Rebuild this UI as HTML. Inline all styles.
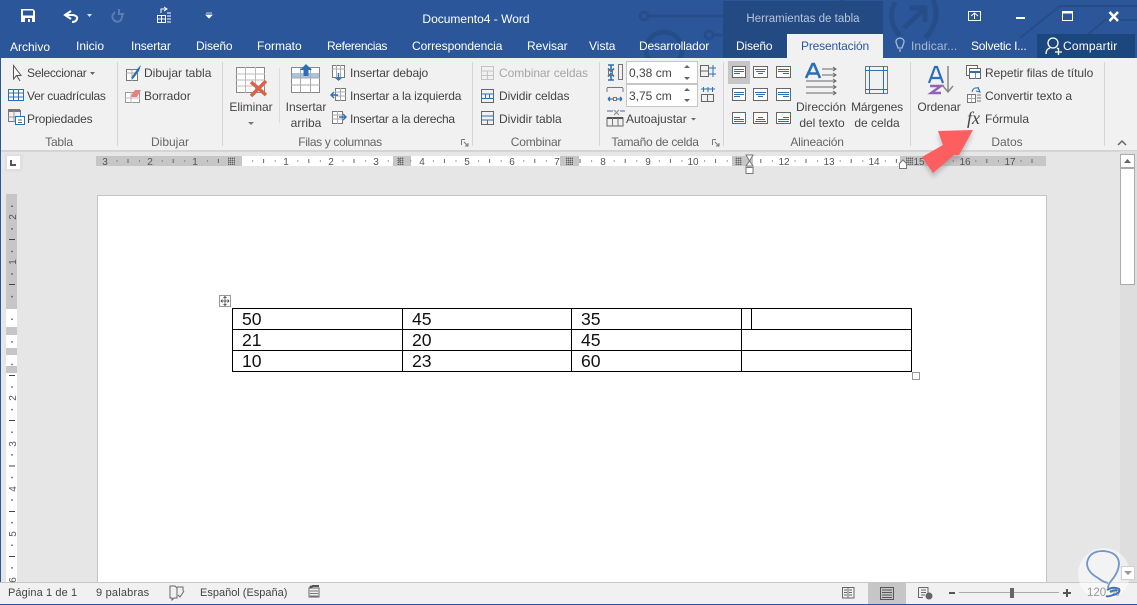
<!DOCTYPE html>
<html lang="es"><head><meta charset="utf-8"><title>Documento4 - Word</title>
<style>
html,body{margin:0;padding:0}
#w{position:relative;width:1137px;height:605px;overflow:hidden;background:#e6e6e6;font-family:"Liberation Sans",sans-serif;font-size:12px;color:#444}
#w div,#w span{position:absolute}
.t{white-space:nowrap;line-height:14px}
.c{transform:translateX(-50%);text-align:center}
.w{color:#fff}
.g{color:#666}
svg{position:absolute;left:0;top:0}
</style></head><body>
<div id="w">
<div style="left:0;top:0;width:1137px;height:58px;background:#2b579a"></div>
<svg width="1137" height="58" fill="none" stroke="#264d88" stroke-width="3">
<circle cx="644" cy="16" r="4"/><path d="M648 16H760M713 35H790L850 -5"/><circle cx="709" cy="35" r="4"/>
<circle cx="664" cy="50" r="18" stroke-width="5"/>
<path d="M895 2Q886 20 900 36M933 0Q942 20 925 38M904 28L925 8M910 8H925V22" stroke-width="5"/>
<path d="M1020 38L1060 6H1137M1060 58L1105 20H1137" stroke-width="2"/>
</svg>
<div style="left:723px;top:1px;width:160px;height:33px;background:#234a83"></div>
<div style="left:723px;top:34px;width:64px;height:24px;background:#234a83"></div>
<div style="left:787px;top:34px;width:96px;height:25px;background:#f1f1f1;border-left:1px solid #fff;box-sizing:border-box"></div>
<div style="left:1037px;top:34px;width:98px;height:24px;background:#1c467e"></div>
<div style="left:0;top:58px;width:1137px;height:92px;background:#f1f1f1;border-bottom:2px solid #d4d4d4"></div>
<div style="left:0;top:0;width:1px;height:605px;background:#2b579a"></div>

<span class="t w c" style="left:476px;top:12px">Documento4 - Word</span>
<span class="t c" style="left:803px;top:12px;color:#b6c4da;font-size:11.5px">Herramientas de tabla</span>
<span class="t w" style="left:10px;top:40px">Archivo</span>
<span class="t w" style="left:76px;top:39px">Inicio</span>
<span class="t w" style="left:131px;top:39px;letter-spacing:-.12px">Insertar</span>
<span class="t w" style="left:196px;top:39px;letter-spacing:-.15px">Diseño</span>
<span class="t w" style="left:257px;top:39px">Formato</span>
<span class="t w" style="left:327px;top:39px;letter-spacing:-.36px">Referencias</span>
<span class="t w" style="left:412px;top:39px;letter-spacing:-.07px">Correspondencia</span>
<span class="t w" style="left:527px;top:39px">Revisar</span>
<span class="t w" style="left:589px;top:39px">Vista</span>
<span class="t w" style="left:639px;top:39px;letter-spacing:-.15px">Desarrollador</span>
<span class="t w" style="left:736px;top:39px;letter-spacing:-.15px">Diseño</span>
<span class="t" style="left:801px;top:39px;color:#2b579a;letter-spacing:-.17px">Presentación</span>
<span class="t" style="left:911px;top:39px;color:#a9b9d3;letter-spacing:.1px">Indicar...</span>
<span class="t w" style="left:971px;top:39px;letter-spacing:-.25px">Solvetic I...</span>
<span class="t w" style="left:1063px;top:39px;letter-spacing:.2px">Compartir</span>

<span class="t" style="left:27px;top:66px;letter-spacing:-.3px">Seleccionar</span>
<span class="t" style="left:27px;top:89px;letter-spacing:-.27px">Ver cuadrículas</span>
<span class="t" style="left:27px;top:112px;letter-spacing:-.18px">Propiedades</span>
<span class="t g c" style="left:59px;top:135px;letter-spacing:-.2px">Tabla</span>
<span class="t" style="left:144px;top:66px">Dibujar tabla</span>
<span class="t" style="left:144px;top:89px">Borrador</span>
<span class="t g c" style="left:170px;top:135px">Dibujar</span>
<span class="t c" style="left:251px;top:100px">Eliminar</span>
<span class="t c" style="left:306px;top:100px">Insertar</span>
<span class="t c" style="left:306px;top:116px">arriba</span>
<span class="t" style="left:350px;top:66px;letter-spacing:-.13px">Insertar debajo</span>
<span class="t" style="left:350px;top:89px;letter-spacing:-.18px">Insertar a la izquierda</span>
<span class="t" style="left:350px;top:112px;letter-spacing:-.25px">Insertar a la derecha</span>
<span class="t g c" style="left:340px;top:135px;letter-spacing:-.37px">Filas y columnas</span>
<span class="t" style="left:499px;top:66px;color:#a6a6a6;letter-spacing:-.07px">Combinar celdas</span>
<span class="t" style="left:499px;top:89px;letter-spacing:-.07px">Dividir celdas</span>
<span class="t" style="left:499px;top:112px">Dividir tabla</span>
<span class="t g c" style="left:536px;top:135px;letter-spacing:-.2px">Combinar</span>
<div style="left:626px;top:61px;width:70px;height:21px;background:#fff;border:1px solid #c6c6c6"></div>
<div style="left:626px;top:84px;width:70px;height:21px;background:#fff;border:1px solid #c6c6c6"></div>
<span class="t" style="left:629px;top:66px">0,38 cm</span>
<span class="t" style="left:629px;top:89px">3,75 cm</span>
<span class="t" style="left:626px;top:112px">Autoajustar</span>
<span class="t g c" style="left:655px;top:135px;letter-spacing:-.27px">Tamaño de celda</span>
<span class="t c" style="left:821px;top:100px">Dirección</span>
<span class="t c" style="left:822px;top:116px">del texto</span>
<span class="t c" style="left:877px;top:100px;letter-spacing:-.2px">Márgenes</span>
<span class="t c" style="left:877px;top:116px">de celda</span>
<span class="t g c" style="left:817px;top:135px;letter-spacing:-.2px">Alineación</span>
<span class="t c" style="left:939px;top:100px;letter-spacing:-.1px">Ordenar</span>
<span class="t" style="left:985px;top:66px;letter-spacing:-.05px">Repetir filas de título</span>
<span class="t" style="left:985px;top:89px;letter-spacing:-.06px">Convertir texto a</span>
<span class="t" style="left:985px;top:112px">Fórmula</span>
<span class="t g c" style="left:1007px;top:135px">Datos</span>

<!-- ruler -->
<div style="left:96px;top:156px;width:950px;height:10px;background:#c6c6c6"></div>
<div style="left:242px;top:156px;width:151px;height:10px;background:#fff"></div>
<div style="left:411px;top:156px;width:149px;height:10px;background:#fff"></div>
<div style="left:579px;top:156px;width:153px;height:10px;background:#fff"></div>
<div style="left:753px;top:156px;width:147px;height:10px;background:#fff"></div>
<div style="left:5px;top:154px;width:18px;height:18px;background:#e0e0e0"></div>
<div style="left:7px;top:156px;width:13px;height:13px;background:#fff"></div>
<!-- vertical ruler -->
<div style="left:6px;top:194px;width:11px;height:388px;background:#fff"></div>
<div style="left:6px;top:194px;width:11px;height:115px;background:#c6c6c6"></div>
<div style="left:6px;top:327px;width:11px;height:8px;background:#c6c6c6"></div>
<div style="left:6px;top:348px;width:11px;height:7px;background:#c6c6c6"></div>
<div style="left:6px;top:366px;width:11px;height:7px;background:#c6c6c6"></div>
<!-- page -->
<div style="left:97px;top:195px;width:950px;height:387px;background:#fff;border:1px solid #c6c6c6;border-bottom:0;box-sizing:border-box"></div>
<!-- scrollbar -->
<div style="left:1120px;top:151px;width:17px;height:431px;background:#dedede"></div>
<div style="left:1120px;top:154px;width:15px;height:14px;background:#fff;border:1px solid #ababab;box-sizing:border-box"></div>
<div style="left:1120px;top:168px;width:15px;height:117px;background:#fff;border:1px solid #ababab;box-sizing:border-box"></div>
<!-- status -->
<div style="left:0;top:582px;width:1137px;height:22px;background:#f1f1f1;border-top:1px solid #c6c6c6;box-sizing:border-box"></div>
<div style="left:0;top:604px;width:1137px;height:1px;background:#2b579a"></div>
<div style="left:868px;top:583px;width:38px;height:21px;background:#c6c6c6"></div>
<span class="t" style="left:8px;top:586px;font-size:11px;letter-spacing:.1px">Página 1 de 1</span>
<span class="t" style="left:96px;top:586px;font-size:11px;letter-spacing:.2px">9 palabras</span>
<span class="t" style="left:200px;top:586px;font-size:11px">Español (España)</span>

<!-- table -->
<svg width="1137" height="605" shape-rendering="crispEdges" stroke="#000" fill="none">
<path d="M232.5 308.5H911.5V371.5H232.5ZM232.5 329.5H911.5M232.5 350.5H911.5M402.5 308V372M571.5 308V372M741.5 308V372M751.5 308V329"/>
</svg>
<span class="t" style="left:242px;top:309px;font-size:17.6px;line-height:20px;color:#111">50</span>
<span class="t" style="left:412px;top:309px;font-size:17.6px;line-height:20px;color:#111">45</span>
<span class="t" style="left:581px;top:309px;font-size:17.6px;line-height:20px;color:#111">35</span>
<span class="t" style="left:242px;top:330px;font-size:17.6px;line-height:20px;color:#111">21</span>
<span class="t" style="left:412px;top:330px;font-size:17.6px;line-height:20px;color:#111">20</span>
<span class="t" style="left:581px;top:330px;font-size:17.6px;line-height:20px;color:#111">45</span>
<span class="t" style="left:242px;top:351px;font-size:17.6px;line-height:20px;color:#111">10</span>
<span class="t" style="left:412px;top:351px;font-size:17.6px;line-height:20px;color:#111">23</span>
<span class="t" style="left:581px;top:351px;font-size:17.6px;line-height:20px;color:#111">60</span>

<!-- ruler marks and icons -->
<svg width="1137" height="605" fill="none">
<defs><filter id="b" x="-30%" y="-30%" width="160%" height="160%"><feGaussianBlur stdDeviation="2.5"/></filter>
<pattern id="h" width="2" height="2" patternUnits="userSpaceOnUse"><rect width="1" height="1" fill="#666"/><rect x="1" width="1" height="1" fill="#999"/><rect y="1" width="1" height="1" fill="#999"/></pattern></defs>
<!-- group separators -->
<path d="M117.500 62V146M222.500 62V146M472.500 62V146M599.500 62V146M723.500 62V146M910.500 62V146M1104.500 62V146" stroke="#d5d5d5"/>
<g font-family="Liberation Sans, sans-serif" font-size="10" fill="#555" text-anchor="middle">
<text x="105" y="165">3</text><text x="150" y="165">2</text><text x="195" y="165">1</text><text x="286" y="165">1</text><text x="331" y="165">2</text><text x="376" y="165">3</text><text x="422" y="165">4</text><text x="467" y="165">5</text><text x="512" y="165">6</text><text x="557" y="165">7</text><text x="603" y="165">8</text><text x="648" y="165">9</text><text x="693" y="165">10</text><text x="784" y="165">12</text><text x="829" y="165">13</text><text x="874" y="165">14</text><text x="919" y="165">15</text><text x="965" y="165">16</text><text x="1010" y="165">17</text>
<text transform="translate(16,217) rotate(-90)">2</text><text transform="translate(16,262) rotate(-90)">1</text><text transform="translate(16,398) rotate(-90)">2</text><text transform="translate(16,444) rotate(-90)">3</text><text transform="translate(16,489) rotate(-90)">4</text><text transform="translate(16,534) rotate(-90)">5</text><text transform="translate(16,580) rotate(-90)">6</text>
</g>
<path d="M116.500 161H1040" stroke="#666" stroke-width="1.300" stroke-dasharray="1 21.6"/>
<path d="M127.500 161H1040" stroke="#666" stroke-width="4" stroke-dasharray="1 44.2"/>
<path d="M12 205.500V570" stroke="#444" stroke-width="1.300" stroke-dasharray="1.500 21.1"/>
<path d="M9 239.500H15M9 284.500H15M9 375.500H15M9 420.500H15M9 466H15M9 511.500H15M9 556.500H15" stroke="#444"/>
<rect x="228" y="157" width="7" height="8" fill="url(#h)"/><rect x="397" y="157" width="7" height="8" fill="url(#h)"/><rect x="566" y="157" width="7" height="8" fill="url(#h)"/><rect x="735" y="157" width="7" height="8" fill="url(#h)"/><rect x="906" y="157" width="7" height="8" fill="url(#h)"/>
<path d="M746 155H753L749.500 161ZM749.500 161L746 166H753Z" fill="#fff" stroke="#777"/><rect x="746" y="167.500" width="7" height="6" fill="#fff" stroke="#777"/>
<path d="M899.500 168.500V163.500L903 160L906.500 163.500V168.500Z" fill="#fff" stroke="#777"/>
<path d="M11 160V165H16" stroke="#555" stroke-width="2"/>

<!-- title icons -->
<path d="M21 9H33L35 11V22H21Z" fill="#fff"/><rect x="23" y="10.500" width="10" height="5" fill="#2b579a"/><rect x="25" y="18" width="7" height="4" fill="#2b579a"/><rect x="28" y="19" width="2" height="3" fill="#fff"/>
<path d="M71 11L65 15L71 19M65 15H73Q78 16 77 19Q76 22 72 22" stroke="#fff" stroke-width="2"/><path d="M87 14H92L89.500 17Z" fill="#dbe3ef"/>
<path d="M115 12Q111 16 113 19Q116 23 120 21Q123 18 122 13M119 9V14H124" stroke="#5c7cb0" stroke-width="2"/>
<rect x="157.500" y="15.500" width="8" height="7" stroke="#fff"/><path d="M157 19H166M161.500 16V23" stroke="#fff"/><path d="M161 13V9H166M164 7L167 9L164 11M167 13H171M167 16H171M167 19H171M167 22H171" stroke="#fff"/>
<path d="M206 13H212M206 15H212L209 18Z" fill="#fff" stroke="#fff" stroke-width=".8"/>
<rect x="968.500" y="11.500" width="12" height="9" stroke="#fff"/><path d="M971 16L974.500 13L978 16M974.500 13V19" stroke="#fff"/>
<rect x="1016" y="17" width="9" height="2" fill="#fff"/>
<rect x="1062.500" y="11.500" width="10" height="9" stroke="#fff"/><rect x="1062" y="11" width="11" height="2.500" fill="#fff"/>
<path d="M1109.500 12L1118 21M1118 12L1109.500 21" stroke="#fff" stroke-width="2.500"/>
<path d="M900 49V52M897 45Q894 39 900 38Q906 39 903 45L902 48H898Z" stroke="#a9b9d3" stroke-width="1.300"/>
<circle cx="1053" cy="43" r="5" stroke="#fff" stroke-width="1.300"/><path d="M1046 54Q1046 49 1050 48M1057 48L1059 49M1055 52H1062M1058.500 49V55" stroke="#fff" stroke-width="1.300"/>

<!-- Tabla icons -->
<path d="M13.500 65.500V79L16.500 75.500H21L13.500 65.500Z" fill="#fff" stroke="#555"/><path d="M17 76L20 81" stroke="#555"/>
<path d="M90 72H95L92.500 75Z" fill="#666"/>
<rect x="8.500" y="89.500" width="15" height="11" fill="#fff" stroke="#2b6fb5"/><path d="M8 93H24M8 97H24M13.500 89V101M18.500 89V101" stroke="#2b6fb5"/>
<rect x="8.500" y="110.500" width="12" height="11" stroke="#777"/><path d="M8 110.500H20" stroke="#777" stroke-width="3"/><path d="M8 117H20M14 111V122" stroke="#999"/>
<rect x="15.500" y="116.500" width="9" height="8" fill="#fff" stroke="#2b6fb5"/><path d="M18 120H22M18 122.500H22" stroke="#666"/>
<!-- Dibujar -->
<rect x="126.500" y="69.500" width="11" height="11" fill="#fff" stroke="#777"/><path d="M126 73H138M132 70V81" stroke="#aaa"/>
<path d="M131 78L138 68L141 65L139 71L133 79Z" fill="#2b6fb5"/>
<rect x="125.500" y="92.500" width="14" height="10" fill="#fff" stroke="#999"/><path d="M130 97L135 90H141L137 97Z" fill="#ee7c7c"/><path d="M125 98H140M131 92V103" stroke="#bbb"/>
<!-- Eliminar -->
<rect x="236.500" y="67.500" width="28" height="25" fill="#fff" stroke="#888"/><path d="M236 74H265M236 80H265M236 86H265M245.500 67V93M255.500 67V93" stroke="#bbb"/>
<path d="M251 82L266 95M266 81L251 96" stroke="#d9634a" stroke-width="3.500"/>
<path d="M248 122H254L251 125Z" fill="#777"/>
<path d="M279.500 68V123" stroke="#dcdcdc"/>
<!-- Insertar arriba -->
<rect x="291.500" y="67.500" width="28" height="25" fill="#fff" stroke="#888"/><rect x="292" y="73" width="27" height="5" fill="#a9c3dd"/><path d="M291 78H320M291 85H320M300.500 68V93M310.500 68V93" stroke="#aaa"/>
<path d="M306 64L300 70H303.500V76H308.500V70H312Z" fill="#2b6fb5"/>
<rect x="332.500" y="65.500" width="12" height="12" fill="#fff" stroke="#777"/><path d="M332 69H345M336.500 65V78M340.500 65V78" stroke="#aaa"/><path d="M338.500 73V80M335.500 77.500L338.500 80L341.500 77.500" stroke="#2b6fb5" stroke-width="1.400"/>
<rect x="335.500" y="88.500" width="10" height="12" fill="#fff" stroke="#777"/><path d="M335 92H346M335 96H346M340.500 88V101" stroke="#aaa"/><path d="M331 95H338M334 92L331 95L334 98" stroke="#2b6fb5" stroke-width="1.400"/>
<rect x="332.500" y="111.500" width="10" height="12" fill="#fff" stroke="#777"/><path d="M332 115H343M332 119H343M337.500 111V124" stroke="#aaa"/><path d="M339 117H346M343 114L346 117L343 120" stroke="#2b6fb5" stroke-width="1.400"/>
<!-- Combinar -->
<rect x="481.500" y="66.500" width="12" height="13" stroke="#c4c4c4"/><path d="M481 71H494M481 75.500H494M487.500 71V80" stroke="#c4c4c4"/>
<rect x="481.500" y="89.500" width="12" height="13" stroke="#666"/><path d="M481 94H494M481 98.500H494" stroke="#2b6fb5"/><path d="M485.500 94V98M489.500 94V98" stroke="#2b6fb5"/>
<rect x="481.500" y="111.500" width="12" height="13" stroke="#666"/><path d="M481 116H494M481 120H494" stroke="#2b6fb5"/><path d="M487.500 120V125" stroke="#666"/>
<!-- Tamano icons -->
<path d="M608 65H614M611 65V71M608 68.500L611 71.500L614 68.500M608 80H614M611 80V74M608 76.500L611 73.500L614 76.500" stroke="#2b6fb5" stroke-width="1.600"/><rect x="608.500" y="70.500" width="4" height="4" stroke="#777"/><rect x="618.500" y="64.500" width="4" height="15" stroke="#777"/>
<path d="M607 87.500H623M607 92V88M623 92V88" stroke="#777"/><path d="M608 99H613M608 99L610 97M608 99L610 101M617 99H622M622 99L620 97M622 99L620 101" stroke="#2b6fb5" stroke-width="1.300"/><rect x="613.500" y="97.500" width="3" height="3" stroke="#777"/>
<path d="M607 111H613M620 111H625" stroke="#2b6fb5"/><path d="M614 110L619 115M619 110L614 115" stroke="#888"/><rect x="607" y="118" width="16" height="8" stroke="#666"/><path d="M607 118H623" stroke="#555" stroke-width="2"/><path d="M612.500 118V126M618 118V126" stroke="#777"/>
<path d="M687 65L690 68H684ZM684 77H690L687 80Z" fill="#666"/><path d="M687 88L690 91H684ZM684 99H690L687 102Z" fill="#666"/>
<path d="M691 118H696L693.500 120.500Z" fill="#666"/>
<rect x="700.500" y="65.500" width="8" height="11" stroke="#666"/><path d="M700 71H708" stroke="#666"/><path d="M713 65V77M709 68H716M709 74H716" stroke="#2b6fb5"/>
<path d="M701 89H715M703.500 87V92M708 87V92M712.500 87V92" stroke="#2b6fb5"/><rect x="701.500" y="94.500" width="12" height="7" stroke="#666"/><path d="M707.500 94V102" stroke="#666"/>
<!-- dialog launchers -->
<path d="M461.500 139.500H465M461.500 139.500V145M464 142L468 146M468 143V146H465" stroke="#777"/>
<path d="M712.500 139.500H716M712.500 139.500V145M715 142L719 146M719 143V146H716" stroke="#777"/>
<!-- Alineacion -->
<rect x="728" y="61" width="22" height="23" fill="#c6c6c6"/>
<g stroke="#666" fill="#fff"><rect x="732.500" y="66.500" width="13" height="11"/><rect x="753.500" y="66.500" width="14" height="11"/><rect x="776.500" y="66.500" width="14" height="11"/><rect x="732.500" y="88.500" width="13" height="12"/><rect x="753.500" y="88.500" width="14" height="12"/><rect x="776.500" y="88.500" width="14" height="12"/><rect x="732.500" y="112.500" width="13" height="11"/><rect x="753.500" y="112.500" width="14" height="11"/><rect x="776.500" y="112.500" width="14" height="11"/></g>
<path d="M734 69.500H744M734 71.500H744M734 73.500H740M755 69.500H766M756 71.500H765M758 73.500H763M778 69.500H789M778 71.500H789M783 73.500H789M734 92.500H744M734 94.500H744M734 96.500H740M755 92.500H766M756 94.500H765M758 96.500H763M778 92.500H789M778 94.500H789M783 96.500H789M734 117.500H740M734 119.500H744M734 121.500H744M758 117.500H763M756 119.500H765M755 121.500H766M783 117.500H789M778 119.500H789M778 121.500H789" stroke="#2b6fb5"/>
<path d="M806 78L812.500 64H814L820 78M809 73.500H818" stroke="#2b6fb5" stroke-width="2.600"/>
<path d="M822 69H836M822 75H836M806 81H836M806 87H836M806 93H836M833 67L836 69L833 71M833 73L836 75L833 77M833 79L836 81L833 83M833 85L836 87L833 89M833 91L836 93L833 95" stroke="#666"/>
<rect x="865.500" y="66.500" width="22" height="27" stroke="#777"/><rect x="869.500" y="70.500" width="14" height="19" stroke="#2b6fb5"/><path d="M865 70.500H888M865 89.500H888M869.500 66V94M883.500 66V94" stroke="#2b6fb5"/>
<!-- Datos -->
<path d="M929 83L935 67H937L943 83M931 78H941" stroke="#2b6fb5" stroke-width="2.200"/>
<path d="M930 86H941L931 93H941" stroke="#8e63b8" stroke-width="2.400"/>
<path d="M948 66V92M943 86L948 92L953 86" stroke="#888" stroke-width="1.500"/>
<rect x="966.500" y="65.500" width="11" height="10" fill="#fff" stroke="#666"/><rect x="969.500" y="68.500" width="11" height="10" fill="#fff" stroke="#666"/><path d="M970 72H980" stroke="#2b6fb5" stroke-width="2"/><path d="M975.500 73V79" stroke="#888"/>
<rect x="967.500" y="94.500" width="8" height="8" fill="#fff" stroke="#777"/><path d="M968 98.500H975M971.500 95V102" stroke="#aaa"/><path d="M977 95H981M977 98H981M977 101H981" stroke="#777"/><path d="M972 92Q973 87 978 88L980 92M978 87L980 92L976 91" stroke="#2b6fb5"/>
<text x="967" y="124" font-family="Liberation Serif, serif" font-style="italic" font-size="18" fill="#444">fx</text>
<path d="M1118 145L1122 141L1126 145" stroke="#666" stroke-width="1.500"/>
<!-- scroll arrows -->
<path d="M1124 163L1127.500 159L1131 163Z" fill="#666"/>
<!-- table handles -->
<rect x="219.500" y="295.500" width="11" height="11" fill="#fff" stroke="#999"/><path d="M225 297V305M221 301H229M223.500 298L225 296.500L226.500 298M223.500 304L225 305.500L226.500 304M222.500 299.500L221 301L222.500 302.500M227.500 299.500L229 301L227.500 302.500" stroke="#444" stroke-width=".8"/>
<rect x="912.500" y="372.500" width="7" height="7" fill="#fff" stroke="#999"/>
<!-- status icons -->
<path d="M170 586H175L177 588V598H174L172 600V598H170Z" stroke="#666"/><path d="M177 587H183V591M178 595L180 597L184 591" stroke="#666"/>
<rect x="309" y="588" width="10" height="9" stroke="#666"/><circle cx="311" cy="587" r="1.500" fill="#555"/><path d="M312 586H319" stroke="#555" stroke-width="2"/><path d="M310 591H318M310 593.500H318M310 596H318" stroke="#777"/>
<path d="M842.500 587.500H848V598H842.500ZM848 587.500H854V598H848ZM844 590H847M844 592.500H847M844 595H847M849 590H852M849 592.500H852M849 595H852" stroke="#666"/>
<rect x="880.500" y="587.500" width="13" height="12" stroke="#555"/><path d="M882 590H892M882 592.500H892M882 595H892M882 597.500H892" stroke="#555"/>
<path d="M918.500 587.500H928V596M921 590H926M921 592.500H926M921 595H925M918.500 587.500V597.500H923" stroke="#666"/><circle cx="929" cy="596" r="3.500" fill="#666"/>
<path d="M949 593H955" stroke="#555" stroke-width="2"/><path d="M959 592.500H1059" stroke="#aaa"/><rect x="1010" y="588" width="4" height="10" fill="#666"/><path d="M1063 593H1071M1067 589V597" stroke="#555" stroke-width="2"/>
<!-- arrow -->
<path d="M938 135L973 134L959 160L954 159L933 177L922 161L943 149Z" fill="#666" opacity=".35" filter="url(#b)"/>
<path d="M938 131L973 130L959 155L954 155L933 173L922 157L943 145Z" fill="#fd5f60"/>
<!-- watermark -->
<circle cx="1104" cy="574" r="26" fill="#fff" fill-opacity=".5"/>
</svg>
<span class="t" style="left:1087px;top:586px;font-size:11.5px;color:#999">120 %</span>
<svg width="1137" height="605" fill="none">
<path d="M1108 583Q1103 582 1098 578Q1087 572 1087 563Q1089 551 1103 551Q1118 552 1119 563Q1119 572 1111 581Q1108 585 1108 588" stroke="#6f97c9" stroke-width="1.800"/>
<path d="M1107 590Q1113 586 1119 589Q1121 593 1113 595Q1108 597 1106 596M1110 592Q1116 589 1117 591" stroke="#3c74b8" stroke-width="2"/>
<rect x="1121.500" y="566.500" width="13" height="13" fill="#fff" stroke="#d0d0d0"/><path d="M1124 571H1132L1128 575Z" fill="#999"/>
</svg>
</div>
</body></html>
